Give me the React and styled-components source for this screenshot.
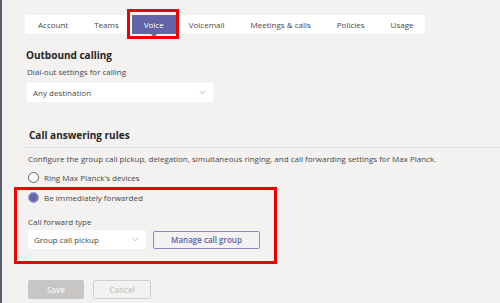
import React from 'react';
import styled, { createGlobalStyle } from 'styled-components';
import { ChevronDown } from 'lucide-react';

const GlobalStyle = createGlobalStyle`
  html, body {
    margin: 0;
    padding: 0;
    background: #f3f2f1;
  }
  * {
    box-sizing: border-box;
  }
`;

const Page = styled.div`
  width: 500px;
  height: 303px;
  overflow: hidden;
  background: #f3f2f1;
  border-left: 2px solid #5c5b6b;
  padding: 15px 0 0 23px;
  font-family: 'Open Sans', 'Noto Sans', sans-serif;
  color: #484644;
  display: flex;
  flex-direction: column;
`;

const TabBar = styled.div`
  display: flex;
  align-items: stretch;
  width: 400px;
  height: 19px;
  background: #ffffff;
  border-radius: 2px;
`;

const Tab = styled.div`
  position: relative;
  display: flex;
  align-items: center;
  white-space: nowrap;
  padding: 0 ${(p) => (p.$active ? 12 : 13)}px;
  font-size: 8px;
  color: ${(p) => (p.$active ? '#ffffff' : '#484644')};
  background: ${(p) => (p.$active ? '#6264a7' : 'transparent')};

  ${(p) =>
    p.$active &&
    `
    &::before {
      content: '';
      position: absolute;
      left: 50%;
      bottom: -3px;
      margin-left: -3px;
      border-left: 3px solid transparent;
      border-right: 3px solid transparent;
      border-top: 3px solid #6264a7;
    }
    &::after {
      content: '';
      position: absolute;
      left: -5px;
      right: -3px;
      top: -6px;
      bottom: -5px;
      border: 3px solid #ee0000;
    }
  `}
`;

const Heading = styled.div`
  font-size: 10px;
  line-height: 14px;
  font-weight: 700;
  color: #252423;
  margin-top: ${(p) => p.$top}px;
  padding-left: ${(p) => p.$indent || 0}px;
`;

const Divider = styled.div`
  margin-top: 5px;
  height: 1px;
  background: #e1dfdd;
`;

const Label = styled.div`
  font-size: 8px;
  line-height: 12px;
  color: #484644;
  margin-top: ${(p) => p.$top}px;
  padding-left: ${(p) => p.$indent || 0}px;
  white-space: nowrap;
`;

const Select = styled.div`
  display: flex;
  align-items: center;
  justify-content: space-between;
  width: ${(p) => p.$width}px;
  height: 19px;
  margin-top: ${(p) => p.$top || 0}px;
  margin-left: ${(p) => p.$left || 0}px;
  padding: 0 5px 0 6px;
  background: #ffffff;
  border-radius: 2px;
  font-size: 8px;
  color: #484644;
  svg {
    color: #8a8886;
  }
`;

const RadioRow = styled.div`
  display: flex;
  align-items: center;
  gap: 5px;
  height: 14px;
  margin-top: ${(p) => p.$top || 0}px;
  padding-left: ${(p) => p.$indent || 0}px;
  font-size: 8px;
  color: #484644;
`;

const RadioDot = styled.span`
  width: 11px;
  height: 11px;
  border-radius: 50%;
  border: 1px solid ${(p) => (p.$checked ? '#9a9bce' : '#605e5c')};
  background: ${(p) => (p.$checked ? '#6264a7' : '#ffffff')};
  box-shadow: ${(p) => (p.$checked ? 'inset 0 0 0 1px #7f81bf' : 'none')};
`;

const Highlight = styled.div`
  width: 263px;
  margin-left: -14px;
  margin-top: 3px;
  padding: 0 0 12px 11px;
  border: 3px solid #ee0000;
`;

const Row = styled.div`
  display: flex;
  align-items: center;
  gap: 7px;
  margin-top: 2px;
`;

const OutlineButton = styled.div`
  display: flex;
  align-items: center;
  justify-content: center;
  width: 107px;
  height: 18px;
  border: 1px solid #8b8cc7;
  border-radius: 2px;
  background: #f3f2f1;
  color: #5b5fa6;
  font-size: 8px;
  font-weight: 600;
`;

const Footer = styled.div`
  display: flex;
  gap: 9px;
  margin-top: 16px;
`;

const FooterButton = styled.div`
  display: flex;
  align-items: center;
  justify-content: center;
  width: ${(p) => p.$width}px;
  height: 19px;
  border-radius: 2px;
  font-size: 8px;
  font-weight: 600;
  background: ${(p) => (p.$primary ? '#c8c6c4' : 'transparent')};
  border: 1px solid ${(p) => (p.$primary ? '#c8c6c4' : '#d2d0ce')};
  color: ${(p) => (p.$primary ? '#f3f2f1' : '#c8c6c4')};
`;

const Section = styled.div`
  padding-left: ${(p) => p.$indent || 0}px;
  display: flex;
  flex-direction: column;
`;

const tabs = ['Account', 'Teams', 'Voice', 'Voicemail', 'Meetings & calls', 'Policies', 'Usage'];

const App = () => {
  return (
    <>
      <GlobalStyle />
      <Page>
        <TabBar>
          {tabs.map((t) => (
            <Tab key={t} $active={t === 'Voice'}>
              {t}
            </Tab>
          ))}
        </TabBar>

        <Heading $top={14} $indent={1}>Outbound calling</Heading>
        <Label $top={4} $indent={2}>Dial-out settings for calling</Label>
        <Select $width={186} $top={5} $left={2}>
          Any destination
          <ChevronDown size={11} strokeWidth={1.2} />
        </Select>

        <Heading $top={26} $indent={4}>Call answering rules</Heading>
        <Divider />
        <Section $indent={3}>
          <Label $top={5}>
            Configure the group call pickup, delegation, simultaneous ringing, and call forwarding settings for Max Planck.
          </Label>
          <RadioRow $top={5}>
            <RadioDot />
            Ring Max Planck's devices
          </RadioRow>
          <Highlight>
            <RadioRow>
              <RadioDot $checked />
              Be immediately forwarded
            </RadioRow>
            <Label $top={12}>Call forward type</Label>
            <Row>
              <Select $width={118}>
                Group call pickup
                <ChevronDown size={11} strokeWidth={1.2} />
              </Select>
              <OutlineButton>Manage call group</OutlineButton>
            </Row>
          </Highlight>
          <Footer>
            <FooterButton $primary $width={56}>Save</FooterButton>
            <FooterButton $width={58}>Cancel</FooterButton>
          </Footer>
        </Section>
      </Page>
    </>
  );
};

export default App;
